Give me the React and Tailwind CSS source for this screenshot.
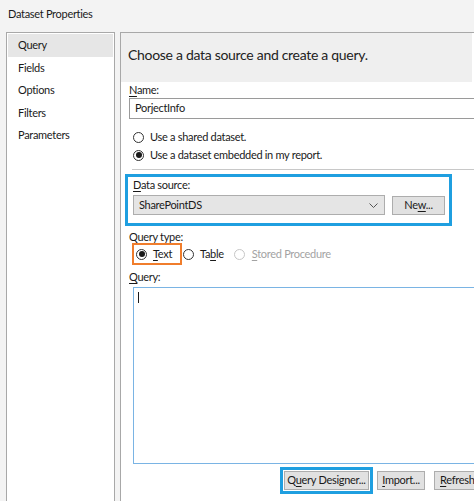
import React from 'react';

const font = { fontFamily: 'Lato, "Noto Sans", sans-serif' };

function Radio({ checked, disabled }) {
  return (
    <span
      className={`flex h-[11px] w-[11px] shrink-0 items-center justify-center rounded-full border bg-white ${
        disabled ? 'border-[#c6c6c6]' : 'border-[#333]'
      }`}
    >
      {checked && <span className="h-[6px] w-[6px] rounded-full bg-[#1a1a1a]" />}
    </span>
  );
}

function Btn({ children, className = '' }) {
  return (
    <div
      className={`flex h-[19px] shrink-0 items-center justify-center whitespace-nowrap border border-[#adadad] bg-[#e1e1e1] text-[#1a1a1a] ${className}`}
    >
      {children}
    </div>
  );
}

export default function App() {
  const pages = ['Query', 'Fields', 'Options', 'Filters', 'Parameters'];

  return (
    <div
      className="h-[501px] w-[474px] overflow-hidden bg-[#f3f3f3] text-[11px] tracking-[-0.3px] text-[#1a1a1a]"
      style={font}
    >
      {/* Title */}
      <div className="h-[32px] pl-[8px] pt-[5px] leading-[18px]">Dataset Properties</div>

      <div className="flex h-[469px]">
        {/* Left nav */}
        <div className="ml-[6px] flex w-[109px] flex-col border border-b-0 border-[#a8a8a8] bg-white p-[1px]">
          {pages.map((p, i) => (
            <div
              key={p}
              className={`flex h-[22.5px] items-center pl-[10px] ${i === 0 ? 'bg-[#e6e6e6]' : ''}`}
            >
              {p}
            </div>
          ))}
        </div>

        {/* Right panel */}
        <div className="ml-[5px] flex-1 overflow-hidden border-l border-t border-[#a8a8a8] bg-white">
          <div className="mr-[2px] h-[49px] bg-[#efefef] pl-[7px] pt-[12px] text-[14px] leading-[20px] text-[#222]">
            Choose a data source and create a query.
          </div>

          <div className="pl-[8px]">
            <div className="leading-[16px]">
              <u className="underline-offset-2">N</u>ame:
            </div>
            <div className="flex h-[21px] w-[360px] items-center border border-[#9a9a9a] pl-[5px]">
              PorjectInfo
            </div>

            <div className="mt-[9px] flex h-[18px] items-center gap-[6px] pl-[4px]">
              <Radio />
              <span>Use a shared dataset.</span>
            </div>
            <div className="flex h-[18px] items-center gap-[6px] pl-[4px]">
              <Radio checked />
              <span>Use a dataset embedded in my report.</span>
            </div>
            <div className="ml-[3px] mt-[5px] h-[1px] bg-[#c8c8c8]" />

            {/* Data source (highlighted) */}
            <div className="ml-[-4px] mt-[4px] w-[327px] border-[3px] border-[#1f9fe0] pb-[8px] pl-[5px]">
              <div className="leading-[16px]">
                <u className="underline-offset-2">D</u>ata source:
              </div>
              <div className="mt-[2px] flex items-center">
                <div className="flex h-[20px] w-[252px] items-center justify-between border border-[#adadad] bg-[#e5e5e5] pl-[5px] pr-[6px]">
                  <span>SharePointDS</span>
                  <svg width="9" height="5" viewBox="0 0 9 5" fill="none">
                    <path d="M0.5 0.5 L4.5 4.5 L8.5 0.5" stroke="#555" strokeWidth="1" />
                  </svg>
                </div>
                <Btn className="ml-[7px] w-[53px]">
                  <span>
                    Ne<u className="underline-offset-2">w</u>...
                  </span>
                </Btn>
              </div>
            </div>

            <div className="mt-[3px] leading-[16px]">Query type:</div>
            <div className="mt-[-2px] flex items-center">
              <div className="ml-[3px] flex h-[22px] w-[50px] items-center gap-[6px] border-2 border-[#f07d2c] pl-[2px]">
                <Radio checked />
                <span>
                  <u className="underline-offset-2">T</u>ext
                </span>
              </div>
              <div className="ml-[1px] flex items-center gap-[6px]">
                <Radio />
                <span>
                  Ta<u className="underline-offset-2">b</u>le
                </span>
              </div>
              <div className="ml-[10px] flex items-center gap-[7px] text-[#a3a3a3]">
                <Radio disabled />
                <span>
                  <u className="underline-offset-2">S</u>tored Procedure
                </span>
              </div>
            </div>

            <div className="mt-[4px] leading-[16px]">
              <u className="underline-offset-2">Q</u>uery:
            </div>
            <div className="ml-[4px] mt-[2px] h-[177px] w-[360px] border border-[#7ab4e4] pl-[4px] pt-[4px]">
              <div className="h-[11px] w-[1px] bg-[#1a1a1a]" />
            </div>

            <div className="ml-[151px] mt-[3px] flex items-center">
              <div className="border-[3px] border-[#1f9fe0] p-[1px]">
                <Btn className="w-[85px]">
                  <span>
                    Q<u className="underline-offset-2">u</u>ery Designer...
                  </span>
                </Btn>
              </div>
              <Btn className="ml-[4px] w-[48px]">
                <span>
                  <u className="underline-offset-2">I</u>mport...
                </span>
              </Btn>
              <Btn className="ml-[9px] w-[48px] !justify-start pl-[5px]">
                <span>
                  <u className="underline-offset-2">R</u>efresh
                </span>
              </Btn>
            </div>
          </div>
        </div>
      </div>
    </div>
  );
}
